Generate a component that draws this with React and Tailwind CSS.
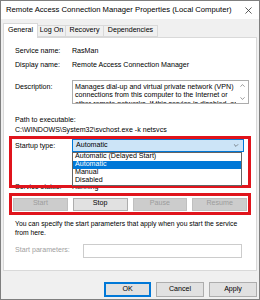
const tabs = [
  { label: 'General', w: 'w-[35px]' },
  { label: 'Log On', w: 'w-[28px]' },
  { label: 'Recovery', w: 'w-[38px]' },
  { label: 'Dependencies', w: 'w-[54px]' },
];

const startupOptions = ['Automatic (Delayed Start)', 'Automatic', 'Manual', 'Disabled'];

const ChevronDown = ({ className }) => (
  <svg viewBox="0 0 8 5" className={className} fill="none" stroke="currentColor" strokeWidth="1">
    <path d="M0.5 0.5 L4 4 L7.5 0.5" />
  </svg>
);

const ChevronUp = ({ className }) => (
  <svg viewBox="0 0 8 5" className={className} fill="none" stroke="currentColor" strokeWidth="1">
    <path d="M0.5 4.5 L4 1 L7.5 4.5" />
  </svg>
);

const Row = ({ label, children }) => (
  <div className="flex h-[10px] items-center pl-[11px]">
    <span className="w-[57px] shrink-0">{label}</span>
    <span className="whitespace-nowrap">{children}</span>
  </div>
);

const ServiceButton = ({ label, disabled }) => (
  <div
    className={
      'flex h-[13px] items-center justify-center border ' +
      (disabled ? 'border-[#bfbfbf] bg-[#cccccc] text-[#9c9c9c]' : 'border-[#adadad] bg-[#e1e1e1] text-black')
    }
  >
    {label}
  </div>
);

const App = () => {
  return (
    <div className="flex h-[300px] w-[260px] flex-col overflow-hidden border border-[#7f7f7f] bg-[#f0f0f0] font-['Liberation_Sans',Arial,sans-serif] text-[7.1px] leading-none text-black">
      {/* title bar */}
      <div className="flex h-[18px] shrink-0 items-center justify-between bg-white pl-[5px] pr-[7px]">
        <span className="whitespace-nowrap text-[7.7px]">Remote Access Connection Manager Properties (Local Computer)</span>
        <svg viewBox="0 0 8 8" className="h-[7px] w-[7px] text-[#333]" stroke="currentColor" strokeWidth="0.9">
          <path d="M0.5 0.5 L7.5 7.5 M7.5 0.5 L0.5 7.5" />
        </svg>
      </div>

      {/* tabs */}
      <div className="flex h-[18px] shrink-0 items-end px-[2px]">
        {tabs.map((tab, i) =>
          i === 0 ? (
            <div key={tab.label} className={'relative z-10 mb-[-1px] flex h-[15px] items-center justify-center border border-b-0 border-[#d9d9d9] bg-white ' + tab.w}>
              {tab.label}
            </div>
          ) : (
            <div key={tab.label} className={'flex h-[12px] items-center justify-center border border-l-0 border-[#d9d9d9] bg-[#f0f0f0] ' + tab.w}>
              {tab.label}
            </div>
          )
        )}
      </div>

      {/* panel */}
      <div className="mx-[2px] flex h-[234px] shrink-0 flex-col border border-[#d9d9d9] bg-white pt-[9px]">
        <Row label="Service name:">RasMan</Row>
        <div className="mt-[4px]">
          <Row label="Display name:">Remote Access Connection Manager</Row>
        </div>

        <div className="mt-[9px] flex pl-[11px]">
          <span className="w-[57px] shrink-0 pt-[4px]">Description:</span>
          <div className="flex h-[24px] w-[177px] overflow-hidden border border-[#acacac]">
            <div className="flex-1 overflow-hidden whitespace-nowrap px-[2px] pt-[2px] leading-[8.4px]">
              <div>Manages dial-up and virtual private network (VPN)</div>
              <div>connections from this computer to the Internet or</div>
              <div>other remote networks. If this service is disabled, any</div>
            </div>
            <div className="flex w-[12px] shrink-0 flex-col items-center justify-between bg-white py-[3px] text-[#555]">
              <ChevronUp className="h-[3px] w-[5px]" />
              <ChevronDown className="h-[3px] w-[5px]" />
            </div>
          </div>
        </div>

        <div className="mt-[12px] flex h-[10px] items-center pl-[11px]">Path to executable:</div>
        <div className="flex h-[9px] items-center whitespace-nowrap pl-[11px]">C:\WINDOWS\System32\svchost.exe -k netsvcs</div>

        {/* startup type (highlighted) */}
        <div className="relative z-10 ml-[5px] mt-[1px] h-[52px] w-[242px] border-[3px] border-[#e0141c]">
          <div className="flex items-start pl-[3px]">
            <span className="w-[57px] shrink-0 pt-[4px]">Startup type:</span>
            <div className="relative w-[172px]">
              <div className="flex h-[13px] items-center justify-between border border-[#0078d7] bg-[#cce4f7] pl-[3px] pr-[4px]">
                <span>Automatic</span>
                <ChevronDown className="h-[3px] w-[6px] text-[#444]" />
              </div>
              <div className="absolute left-0 top-[13px] w-[170px] border border-[#646464] bg-white">
                {startupOptions.map((opt) => (
                  <div
                    key={opt}
                    className={'flex h-[8px] items-center pl-[2px] ' + (opt === 'Automatic' ? 'bg-[#0078d7] text-white' : '')}
                  >
                    {opt}
                  </div>
                ))}
              </div>
            </div>
          </div>
        </div>

        <div className="mt-[-5px]">
          <Row label="Service status:">Running</Row>
        </div>

        {/* service buttons (highlighted) */}
        <div className="ml-[5px] flex h-[22px] w-[242px] items-center border-[3px] border-[#e0141c] px-[1px]">
          <div className="grid w-full grid-cols-4 gap-[5px]">
            <ServiceButton label="Start" disabled />
            <ServiceButton label="Stop" />
            <ServiceButton label="Pause" disabled />
            <ServiceButton label="Resume" disabled />
          </div>
        </div>

        <div className="mt-[4px] pl-[11px] text-[6.8px] leading-[9px]">
          <div className="whitespace-nowrap">You can specify the start parameters that apply when you start the service</div>
          <div>from here.</div>
        </div>

        <div className="mt-[7px] flex items-center pl-[11px]">
          <span className="w-[68px] shrink-0 text-[#a0a0a0]">Start parameters:</span>
          <div className="h-[14px] w-[159px] border border-[#cccccc] bg-white" />
        </div>
      </div>

      {/* dialog buttons */}
      <div className="mt-[11px] flex justify-end gap-[5px] pr-[2px]">
        <div className="flex h-[15px] w-[47px] items-center justify-center border-2 border-[#0078d7] bg-[#e1e1e1]">OK</div>
        <div className="flex h-[15px] w-[48px] items-center justify-center border border-[#adadad] bg-[#e1e1e1]">Cancel</div>
        <div className="flex h-[15px] w-[48px] items-center justify-center border border-[#adadad] bg-[#e1e1e1]">Apply</div>
      </div>
    </div>
  );
};

export default App;
